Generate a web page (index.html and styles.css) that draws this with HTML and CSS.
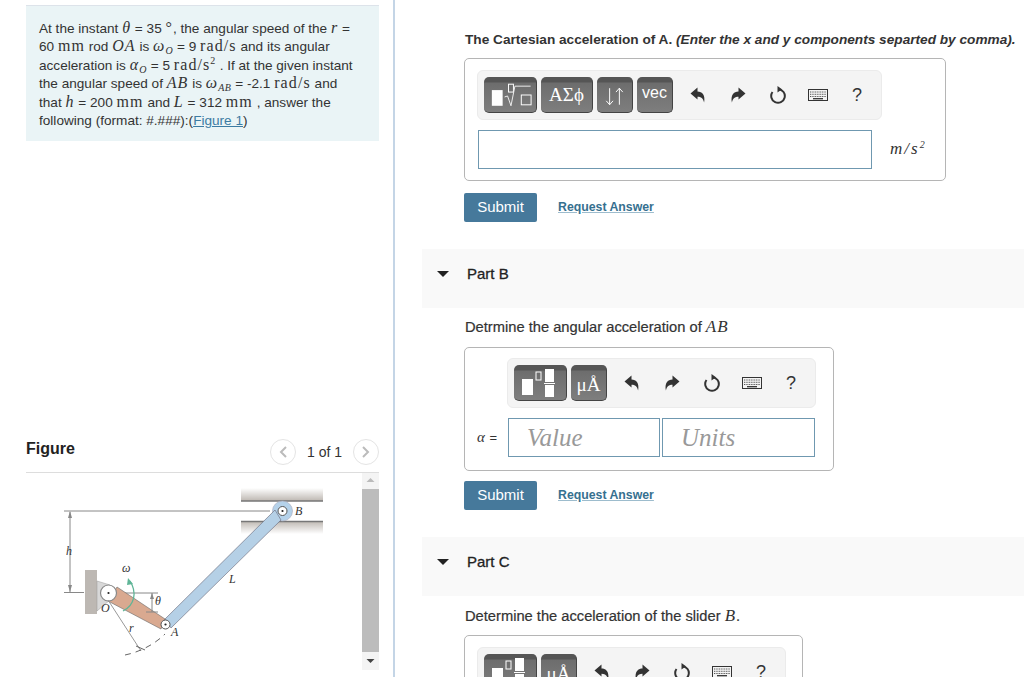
FILE: index.html
```html
<!DOCTYPE html>
<html lang="en">
<head>
    <meta charset="UTF-8">
    <title>Item</title>
    <link rel="stylesheet" href="styles.css">
</head>
<body>
    <svg class="defs" width="0" height="0">
        <symbol id="undo" viewBox="0 0 16 16"><path d="M0.500 6.500 7.500 .5v3.900c4.800 0 8 3.600 6.600 11.100-1-4.100-3-5.700-6.600-5.700V12.500z"/></symbol>
        <symbol id="redo" viewBox="0 0 16 16"><path d="M15.500 6.500 8.500 .5v3.900c-4.800 0-8 3.600-6.600 11.100 1-4.100 3-5.700 6.600-5.700V12.500z"/></symbol>
        <symbol id="reset" viewBox="0 0 18 18"><path d="M9.500 3.200a6.800 6.800 0 1 1-6 2.800" fill="none" stroke="#333" stroke-width="2"/><path d="M8.500 0 13 3.300 8.500 6.600z"/></symbol>
        <symbol id="keys" viewBox="0 0 20 12"><rect x=".5" y=".5" width="19" height="11" fill="#f4f4f4" stroke="#333"/><path d="M2 3h16M2 5.300h16M2 7.500h16" stroke="#555" stroke-dasharray="1 .7"/><path d="M5 9.700h10" stroke="#333" stroke-width="1.300"/></symbol>
        <symbol id="templates" viewBox="0 0 52 36"><rect x="8" y="14" width="11" height="16" fill="#fff"/><rect x="22" y="7" width="5" height="8" fill="none" stroke="#fff"/><rect x="31" y="4" width="9" height="13" fill="#fff"/><path d="M30 18.500h11" stroke="#fff"/><rect x="31" y="20" width="9" height="12" fill="#fff"/></symbol>
    </svg>

    <div class="side">
        <div class="problem">
            At the instant <i class="m">θ</i> = 35 <span class="m">°</span>, the angular speed of the <i class="m">r</i> =<br>
            60 <span class="m">mm</span> rod <i class="m">OA</i> is <i class="m">ω<sub>O</sub></i> = 9 <span class="m">rad/s</span> and its angular<br>
            acceleration is <i class="m">α<sub>O</sub></i> = 5 <span class="m">rad/s<sup>2</sup></span> . If at the given instant<br>
            the angular speed of <i class="m">AB</i> is <i class="m">ω<sub>AB</sub></i> = -2.1 <span class="m">rad/s</span> and<br>
            that <i class="m">h</i> = 200 <span class="m">mm</span> and <i class="m">L</i> = 312 <span class="m">mm</span> , answer the<br>
            following (format: #.###):(<a href="#">Figure 1</a>)
        </div>
        <div class="figure-head">
            <h2>Figure</h2>
            <div class="pager">
                <span class="circle">
                    <svg width="8" height="12" viewBox="0 0 8 12"><path d="M7 1 2 6l5 5" fill="none" stroke="#bbb" stroke-width="2"/></svg>
                </span>
                <span class="count">1 of 1</span>
                <span class="circle">
                    <svg width="8" height="12" viewBox="0 0 8 12"><path d="m1 1 5 5-5 5" fill="none" stroke="#bbb" stroke-width="2"/></svg>
                </span>
            </div>
        </div>
        <div class="figure-body">
            <svg class="drawing" width="336" height="204" viewBox="26 473 336 204">
                <defs>
                    <linearGradient id="wallTop" x1="0" y1="0" x2="0" y2="1"><stop offset="0" stop-color="#fff"/><stop offset="1" stop-color="#bdb7b1"/></linearGradient>
                    <linearGradient id="wallLow" x1="0" y1="0" x2="0" y2="1"><stop offset="0" stop-color="#bdb7b1"/><stop offset="1" stop-color="#fff"/></linearGradient>
                </defs>
                <rect x="241" y="488" width="82" height="13" fill="url(#wallTop)"/>
                <rect x="241" y="521" width="82" height="13" fill="url(#wallLow)"/>
                <path d="M241 501h82M241 521.500h82" stroke="#777" stroke-width="1.300"/>
                <path d="M64 511h206M64 592.500h20M70 512v80" stroke="#888"/>
                <path d="m70 511-2 7h4zM70 592l-2-7h4z" fill="#888"/>
                <rect x="85" y="570" width="12" height="44" fill="#bdb8b3"/>
                <path d="M97 581 110 585V600L97 611z" fill="#d8d8d8" stroke="#999" stroke-width=".5"/>
                <path d="M116 593h42" stroke="#888"/>
                <path d="M117 587 165 619 161 629 108 601z" fill="#d9a990" stroke="#666" stroke-width=".6"/>
                <path d="M152 612v-19M146 612h12" stroke="#888"/>
                <path d="m152 593-2 6h4z" fill="#888"/>
                <circle cx="108.500" cy="593" r="8" fill="#fff" stroke="#888" stroke-width="1.200"/>
                <circle cx="108.500" cy="593" r="1.100" fill="#222"/>
                <path d="M108 600 141 651" stroke="#999"/>
                <path d="M125 655C140 652 155 644 165 634" fill="none" stroke="#666" stroke-dasharray="6 5"/>
                <path d="m136 646 9 4" stroke="#666"/>
                <path d="M123 611C135 605 137 592 130 581" fill="none" stroke="#5fb597" stroke-width="1.300"/>
                <path d="m128 578 5 6-6 1z" fill="#5fb597"/>
                <circle cx="282.500" cy="511" r="10" fill="#b5d2ea" stroke="#aab" stroke-width=".6"/>
                <path d="M165 619 275 510 281 520 171 628z" fill="#b5d0e6" stroke="#667" stroke-width=".6"/>
                <circle cx="282.500" cy="511" r="4.500" fill="#fff" stroke="#555"/>
                <circle cx="282.500" cy="511" r="1.100" fill="#222"/>
                <circle cx="165.500" cy="624.500" r="4.500" fill="#fff" stroke="#555"/>
                <circle cx="165.500" cy="624.500" r="1.100" fill="#222"/>
                <text class="label" x="295" y="515">B</text>
                <text class="label" x="229" y="583">L</text>
                <text class="label" x="66" y="555">h</text>
                <text class="label" x="122" y="572">ω</text>
                <text class="label" x="155" y="605">θ</text>
                <text class="label" x="101" y="612">O</text>
                <text class="label" x="171" y="636">A</text>
                <text class="label" x="129" y="632">r</text>
            </svg>
            <div class="scrollbar">
                <svg width="17" height="16" viewBox="0 0 17 16"><path d="m8.500 5 4 4h-8z" fill="#bbb"/></svg>
                <div class="thumb"></div>
                <svg width="17" height="18" viewBox="0 0 17 18"><path d="m8.500 11 4-4h-8z" fill="#444"/></svg>
            </div>
        </div>
    </div>

    <div class="main">
        <section class="part first">
            <p class="question lead"><b>The Cartesian acceleration of A. <i>(Enter the x and y components separted by comma).</i></b></p>
            <div class="answer answer-a">
                <div class="toolbar">
                    <span class="btn w53">
                        <svg width="53" height="36" viewBox="0 0 53 36"><rect x="8" y="13" width="11" height="16" fill="#fff"/><rect x="25" y="7" width="5" height="8" fill="none" stroke="#fff"/><path d="M21 20l3-1 3.500 10 4-20h16" fill="none" stroke="#eee"/><rect x="38" y="18" width="10" height="10" fill="none" stroke="#fff"/></svg>
                    </span>
                    <span class="btn w52 serif">ΑΣϕ</span>
                    <span class="btn w36">
                        <svg width="36" height="36" viewBox="0 0 36 36"><path d="M13 11v17M9.500 24l3.500 4 3.500-4M23 28V11M19.500 15l3.500-4 3.500 4" fill="none" stroke="#fff"/></svg>
                    </span>
                    <span class="btn w36 vec">vec</span>
                    <div class="tools">
                        <svg class="ti" width="16" height="16"><use href="#undo"/></svg>
                        <svg class="ti" width="16" height="16"><use href="#redo"/></svg>
                        <svg class="ti" width="18" height="18"><use href="#reset"/></svg>
                        <svg class="ti" width="20" height="12"><use href="#keys"/></svg>
                        <span class="ti help">?</span>
                    </div>
                </div>
                <div class="entry">
                    <input class="field wide" type="text">
                    <span class="unit">m/s<sup>2</sup></span>
                </div>
            </div>
            <div class="actions">
                <button class="submit">Submit</button>
                <a class="request" href="#">Request Answer</a>
            </div>
        </section>

        <div class="band"><span class="caret"></span>Part B</div>
        <section class="part">
            <p class="question">Detrmine the angular acceleration of <i class="m">AB</i></p>
            <div class="answer answer-b">
                <div class="toolbar narrow">
                    <span class="btn w53"><svg width="52" height="36"><use href="#templates"/></svg></span>
                    <span class="btn w36 serif mu">μÅ</span>
                    <div class="tools">
                        <svg class="ti" width="16" height="16"><use href="#undo"/></svg>
                        <svg class="ti" width="16" height="16"><use href="#redo"/></svg>
                        <svg class="ti" width="18" height="18"><use href="#reset"/></svg>
                        <svg class="ti" width="20" height="12"><use href="#keys"/></svg>
                        <span class="ti help">?</span>
                    </div>
                </div>
                <div class="entry">
                    <span class="symbol"><i class="m">α</i> =</span>
                    <input class="field half" type="text" placeholder="Value">
                    <input class="field half" type="text" placeholder="Units">
                </div>
            </div>
            <div class="actions">
                <button class="submit">Submit</button>
                <a class="request" href="#">Request Answer</a>
            </div>
        </section>

        <div class="band"><span class="caret"></span>Part C</div>
        <section class="part last">
            <p class="question">Determine the acceleration of the slider <i class="m">B</i>.</p>
            <div class="answer answer-c">
                <div class="toolbar narrow">
                    <span class="btn w53"><svg width="52" height="36"><use href="#templates"/></svg></span>
                    <span class="btn w36 serif mu">μÅ</span>
                    <div class="tools">
                        <svg class="ti" width="16" height="16"><use href="#undo"/></svg>
                        <svg class="ti" width="16" height="16"><use href="#redo"/></svg>
                        <svg class="ti" width="18" height="18"><use href="#reset"/></svg>
                        <svg class="ti" width="20" height="12"><use href="#keys"/></svg>
                        <span class="ti help">?</span>
                    </div>
                </div>
            </div>
        </section>
    </div>
</body>
</html>
```

FILE: styles.css
```css
* { box-sizing: border-box; }
html, body { height: 100%; }
body {
    margin: 0;
    height: 677px;
    overflow: hidden;
    display: flex;
    font-family: "Liberation Sans", Arial, sans-serif;
    font-size: 14px;
    color: #333;
    background: #fff;
}
.defs { position: absolute; }
.m { font-family: "Liberation Serif", serif; font-size: 16px; letter-spacing: 1.100px; line-height: 0; }
sub, sup { font-size: 10px; line-height: 0; letter-spacing: .5px; }
sub { vertical-align: -3px; }
sup { vertical-align: 6px; }

/* left column */
.side {
    width: 395px;
    flex: none;
    padding: 5px 14px 0 26px;
    border-right: 2px solid #c4d5e6;
}
.problem {
    height: 136px;
    padding: 14px 0 0 13px;
    background: #eaf4f6;
    border-top: 1px solid #dde3ea;
    font-size: 13.600px;
    line-height: 18.400px;
    white-space: nowrap;
}
.problem a { color: #3c7ba3; }
.figure-head {
    display: flex;
    justify-content: space-between;
    align-items: center;
    margin-top: 293px;
    height: 39px;
    border-bottom: 1px solid #ddd;
    padding-bottom: 8px;
}
.figure-head h2 { margin: 0; font-size: 16px; color: #222; }
.pager { display: flex; align-items: center; margin-top: 5px; }
.circle {
    width: 26px;
    height: 26px;
    border: 1px solid #e4e4e4;
    border-radius: 50%;
    display: flex;
    align-items: center;
    justify-content: center;
}
.count { margin: 0 11px; }
.figure-body { display: flex; justify-content: space-between; height: 204px; }
.label { font-family: "Liberation Serif", serif; font-style: italic; font-size: 12px; fill: #333; }
.scrollbar { width: 17px; height: 197px; display: flex; flex-direction: column; background: #f4f4f4; }
.thumb { flex: 1; background: #bcbcbc; }
.scrollbar svg { flex: none; }

/* right column */
.main { flex: 1; padding-left: 27px; min-width: 0; }
.part { padding: 0 0 0 42px; }
.first { height: 249px; padding-top: 31px; }
.question {
    margin: 0;
    padding-left: 1px;
    line-height: 18px;
    white-space: nowrap;
    font-size: 14.700px;
    -webkit-text-stroke: .2px #333;
}
.question .m { font-size: 17px; -webkit-text-stroke: 0; }
.lead { font-size: 13.650px; -webkit-text-stroke: 0; }
.band {
    height: 59px;
    background: #f9f9f9;
    padding: 16px 0 0 45px;
    position: relative;
    line-height: 18px;
    color: #222;
    font-size: 15px;
    -webkit-text-stroke: .3px #222;
}
.caret {
    position: absolute;
    left: 15px;
    top: 22px;
    border: 6px solid transparent;
    border-top: 6px solid #222;
    border-bottom: 0;
}
.band + .part { padding-top: 10px; height: 229px; }
.band + .last { padding-top: 11px; }
.answer {
    border: 1px solid #b5b5b5;
    border-radius: 5px;
    padding: 11px 12px;
}
.answer-a { width: 482px; height: 123px; margin-top: 9px; }
.answer-b { width: 370px; height: 124px; margin-top: 11px; padding-top: 10px; }
.answer-c { width: 339px; height: 124px; margin-top: 10px; }
.toolbar {
    width: 405px;
    height: 50px;
    display: flex;
    align-items: center;
    gap: 4px;
    padding-left: 6px;
    background: #f4f4f4;
    border: 1px solid #ebebeb;
    border-radius: 6px;
}
.narrow { width: 309px; }
.answer-b .toolbar { margin-left: 30px; }
.btn {
    height: 36px;
    border-radius: 5px;
    border: 1px solid #444;
    border-width: 0 1px 1px 0;
    background: linear-gradient(#555 0, #555 5px, #6d6d6d 6px, #7e7e7e 100%);
    color: #fff;
    display: flex;
    align-items: center;
    justify-content: center;
    font-size: 14px;
    flex: none;
}
.w53 { width: 53px; }
.w52 { width: 52px; }
.w36 { width: 36px; }
.serif { font-family: "Liberation Serif", serif; font-size: 19px; padding-top: 1px; }
.mu { font-size: 19px; padding-top: 5px; }
.vec { font-size: 16px; padding-bottom: 3px; }
.tools { display: flex; align-items: center; margin-left: 1px; }
.ti { display: block; flex: none; fill: #333; margin: 0 12px; }
.tools svg:nth-child(3) { margin: 0 11px; }
.tools svg:nth-child(4) { margin: 0 10px; }
.help { font-size: 18px; width: 10px; text-align: center; margin-left: 14px; }
.entry { display: flex; align-items: center; margin-top: 10px; }
.field {
    height: 39px;
    margin: 0;
    padding: 0 0 0 18px;
    border: 1px solid #6f98b0;
    background: #fff;
    outline: none;
    font-family: "Liberation Serif", serif;
    font-style: italic;
    font-size: 25px;
}
.field::placeholder { color: #999; opacity: 1; }
.wide { width: 394px; margin-left: 1px; }
.half { width: 152px; margin-right: 2px; }
.half:last-child { width: 153px; margin-right: 0; }
.unit { font-family: "Liberation Serif", serif; font-style: italic; font-size: 17px; letter-spacing: 2px; margin-left: 18px; margin-top: -2px; }
.symbol { width: 31px; flex: none; font-size: 13px; white-space: nowrap; }
.symbol .m { font-size: 15px; }
.actions { display: flex; align-items: center; margin-top: 10px; gap: 21px; }
.first .actions { margin-top: 12px; }
.submit {
    width: 73px;
    height: 29px;
    padding: 0 0 2px;
    border: 0;
    border-radius: 2px;
    background: #46799b;
    color: #fff;
    font-family: inherit;
    font-size: 15px;
}
.request {
    color: #36708f;
    font-size: 12.300px;
    font-weight: bold;
    margin-top: -2px;
    text-decoration-color: #9dbccd;
}
```
